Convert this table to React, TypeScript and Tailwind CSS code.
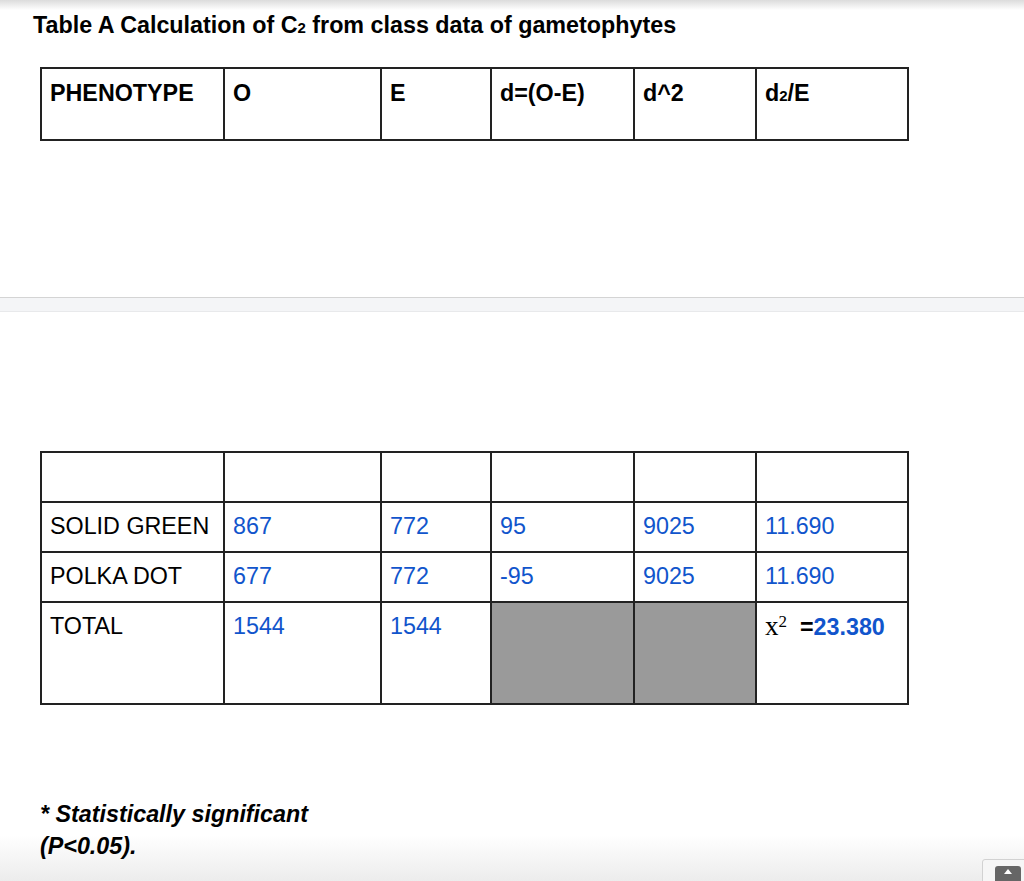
import React from "react";

const cols = ["w-[183px]", "w-[157px]", "w-[110px]", "w-[143px]", "w-[122px]", "w-[152px]"];

const blue = "text-[#1155cc]";
const cell = "border-2 border-[#222] align-top pl-[8px] pt-[10px]";

const rows = [
  { name: "SOLID GREEN", o: "867", e: "772", d: "95", d2: "9025", de: "11.690" },
  { name: "POLKA DOT", o: "677", e: "772", d: "-95", d2: "9025", de: "11.690" },
];

const Colgroup = () => (
  <colgroup>
    {cols.map((c, i) => (
      <col key={i} className={c} />
    ))}
  </colgroup>
);

export default function App() {
  return (
    <div
      className="relative h-[881px] w-full overflow-hidden bg-[linear-gradient(to_bottom,#dcdcdc_0,#ffffff_10px,#ffffff_835px,#ececec_881px)] text-black"
      style={{ fontFamily: '"Liberation Sans", Arial, sans-serif' }}
    >
      <h1 className="pl-[33px] pt-[12px] text-[23.3px] font-bold leading-[26px]">
        Table A Calculation of C<span className="text-[15px]">2</span> from class data of gametophytes
      </h1>

      <table className="ml-[40px] mt-[26px] w-[867px] table-fixed border-collapse">
        <Colgroup />
        <tbody>
          <tr className="h-[72px]">
            {["PHENOTYPE", "O", "E", "d=(O-E)", "d^2"].map((h) => (
              <td key={h} className={`${cell} pt-[11px] text-[23.3px] font-bold leading-[26px]`}>
                {h}
              </td>
            ))}
            <td className={`${cell} pt-[11px] text-[23.3px] font-bold leading-[26px]`}>
              d<span className="text-[15px]">2</span>/E
            </td>
          </tr>
        </tbody>
      </table>

      <div className="mt-[156px] h-[15px] border-t border-b border-t-[#d4d4d4] border-b-[#e8e9eb] bg-[#f4f5f7]" />

      <table className="ml-[40px] mt-[139px] w-[867px] table-fixed border-collapse text-[23.3px] leading-[26px]">
        <Colgroup />
        <tbody>
          <tr className="h-[50px]">
            {cols.map((_, i) => (
              <td key={i} className={cell} />
            ))}
          </tr>
          {rows.map((r) => (
            <tr key={r.name} className="h-[50px]">
              <td className={cell}>{r.name}</td>
              <td className={`${cell} ${blue}`}>{r.o}</td>
              <td className={`${cell} ${blue}`}>{r.e}</td>
              <td className={`${cell} ${blue}`}>{r.d}</td>
              <td className={`${cell} ${blue}`}>{r.d2}</td>
              <td className={`${cell} ${blue}`}>{r.de}</td>
            </tr>
          ))}
          <tr className="h-[102px]">
            <td className={cell}>TOTAL</td>
            <td className={`${cell} ${blue}`}>1544</td>
            <td className={`${cell} ${blue}`}>1544</td>
            <td className={`${cell} bg-[#9a9a9a]`} />
            <td className={`${cell} bg-[#9a9a9a]`} />
            <td className={`${cell} pt-[10px]`}>
              <span className="text-[27px]" style={{ fontFamily: '"Liberation Serif", "Times New Roman", serif' }}>
                x<sup className="text-[17px]">2</sup>
              </span>
              <span className="font-bold">&nbsp; =</span>
              <span className={`font-bold ${blue}`}>23.380</span>
            </td>
          </tr>
        </tbody>
      </table>

      <div className="ml-[40px] mt-[93px] text-[23.3px] font-bold italic leading-[32px]">
        <p>* Statistically significant</p>
        <p>(P&lt;0.05).</p>
      </div>

      <div className="absolute left-[982px] top-[859px] h-[34px] w-[50px] rounded-[3px] border border-[#d2d2d2] bg-[#f6f6f6]">
        <div className="ml-[12px] mt-[6px] flex h-[18px] w-[26px] items-start justify-center rounded-[3px] bg-[#666]">
          <div className="mt-[3px] h-0 w-0 border-x-[4px] border-b-[5px] border-x-transparent border-b-white" />
        </div>
      </div>
    </div>
  );
}
